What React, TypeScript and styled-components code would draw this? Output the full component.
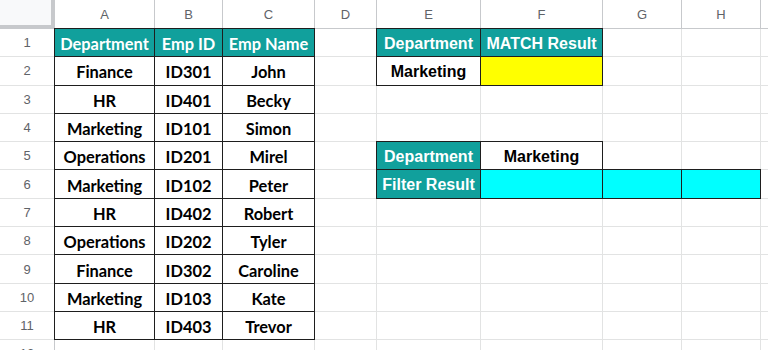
import React from 'react';
import styled, { createGlobalStyle, css } from 'styled-components';

type Tone = 'none' | 'head' | 'body' | 'yellow' | 'cyan';
type Face = 'cal' | 'ari';

const GlobalStyle = createGlobalStyle`
  html, body {
    margin: 0;
    padding: 0;
    background: #ffffff;
    overflow: hidden;
  }
`;

const COLS = [55, 100, 68, 92, 62, 104, 122, 79, 79, 80];
// column I sits just past the right edge, so its letter is not shown
const LETTERS = ['A', 'B', 'C', 'D', 'E', 'F', 'G', 'H', ''];

const Sheet = styled.div`
  display: grid;
  grid-template-columns: ${COLS.map((c) => `${c}px`).join(' ')};
  grid-template-rows: 29px repeat(12, 28.3px);
  width: max-content;
`;

const Corner = styled.div`
  background: #f8f9fa;
  border-right: 4px solid #c7c9cc;
  border-bottom: 4px solid #c7c9cc;
  box-sizing: border-box;
`;

const ColHead = styled.div`
  display: flex;
  align-items: center;
  justify-content: center;
  box-sizing: border-box;
  border-right: 1px solid #c7c9cc;
  border-bottom: 1px solid #c7c9cc;
  font-family: 'Liberation Sans', Arial, sans-serif;
  font-size: 13px;
  color: #5f6368;
  padding-top: 1px;
`;

const RowHead = styled.div`
  display: flex;
  align-items: center;
  justify-content: center;
  box-sizing: border-box;
  border-right: 1px solid #c7c9cc;
  border-bottom: 1px solid #e2e3e3;
  font-family: 'Liberation Sans', Arial, sans-serif;
  font-size: 13px;
  color: #5f6368;
`;

const toneBg: Record<Tone, string> = {
  none: '#ffffff',
  head: '#11a09c',
  body: '#ffffff',
  yellow: '#ffff00',
  cyan: '#00ffff',
};

const Cell = styled.div<{ $tone: Tone; $face: Face }>`
  display: flex;
  align-items: center;
  justify-content: center;
  box-sizing: border-box;
  border-right: 1px solid #e2e3e3;
  border-bottom: 1px solid #e2e3e3;
  background: ${({ $tone }) => toneBg[$tone]};
  color: ${({ $tone }) => ($tone === 'head' ? '#ffffff' : '#000000')};
  font-weight: 700;
  white-space: nowrap;
  padding-top: 2px;
  font-family: ${({ $face }) =>
    $face === 'cal' ? "Lato, 'Open Sans', sans-serif" : "'Liberation Sans', Arial, sans-serif"};
  font-size: ${({ $face }) => ($face === 'cal' ? '16.4px' : '16px')};
  ${({ $tone }) =>
    $tone !== 'none' &&
    css`
      border-right-color: #1e1e1e;
      border-bottom-color: #1e1e1e;
      box-shadow: -1px 0 0 0 #1e1e1e, 0 -1px 0 0 #1e1e1e, -1px -1px 0 0 #1e1e1e;
    `}
`;

type CellData = { text?: string; tone?: Tone; face?: Face };

const employees: [string, string, string][] = [
  ['Finance', 'ID301', 'John'],
  ['HR', 'ID401', 'Becky'],
  ['Marketing', 'ID101', 'Simon'],
  ['Operations', 'ID201', 'Mirel'],
  ['Marketing', 'ID102', 'Peter'],
  ['HR', 'ID402', 'Robert'],
  ['Operations', 'ID202', 'Tyler'],
  ['Finance', 'ID302', 'Caroline'],
  ['Marketing', 'ID103', 'Kate'],
  ['HR', 'ID403', 'Trevor'],
];

const buildRows = (): CellData[][] => {
  const rows: CellData[][] = [];
  for (let r = 0; r < 12; r++) {
    const row: CellData[] = Array.from({ length: 9 }, () => ({}));
    if (r === 0) {
      ['Department', 'Emp ID', 'Emp Name'].forEach((t, i) => (row[i] = { text: t, tone: 'head', face: 'cal' }));
    } else if (r <= 10) {
      employees[r - 1].forEach((t, i) => (row[i] = { text: t, tone: 'body', face: 'cal' }));
    }
    rows.push(row);
  }
  rows[0][4] = { text: 'Department', tone: 'head', face: 'ari' };
  rows[0][5] = { text: 'MATCH Result', tone: 'head', face: 'ari' };
  rows[1][4] = { text: 'Marketing', tone: 'body', face: 'ari' };
  rows[1][5] = { tone: 'yellow' };
  rows[4][4] = { text: 'Department', tone: 'head', face: 'ari' };
  rows[4][5] = { text: 'Marketing', tone: 'body', face: 'ari' };
  rows[5][4] = { text: 'Filter Result', tone: 'head', face: 'ari' };
  rows[5][5] = { tone: 'cyan' };
  rows[5][6] = { tone: 'cyan' };
  rows[5][7] = { tone: 'cyan' };
  return rows;
};

const App: React.FC = () => {
  const rows = buildRows();

  return (
    <>
      <GlobalStyle />
      <Sheet>
        <Corner />
        {LETTERS.map((l, i) => (
          <ColHead key={i}>{l}</ColHead>
        ))}
        {rows.map((row, r) => (
          <React.Fragment key={r}>
            <RowHead>{r + 1}</RowHead>
            {row.map((cell, c) => (
              <Cell key={c} $tone={cell.tone ?? 'none'} $face={cell.face ?? 'ari'}>
                {cell.text}
              </Cell>
            ))}
          </React.Fragment>
        ))}
      </Sheet>
    </>
  );
};

export default App;
